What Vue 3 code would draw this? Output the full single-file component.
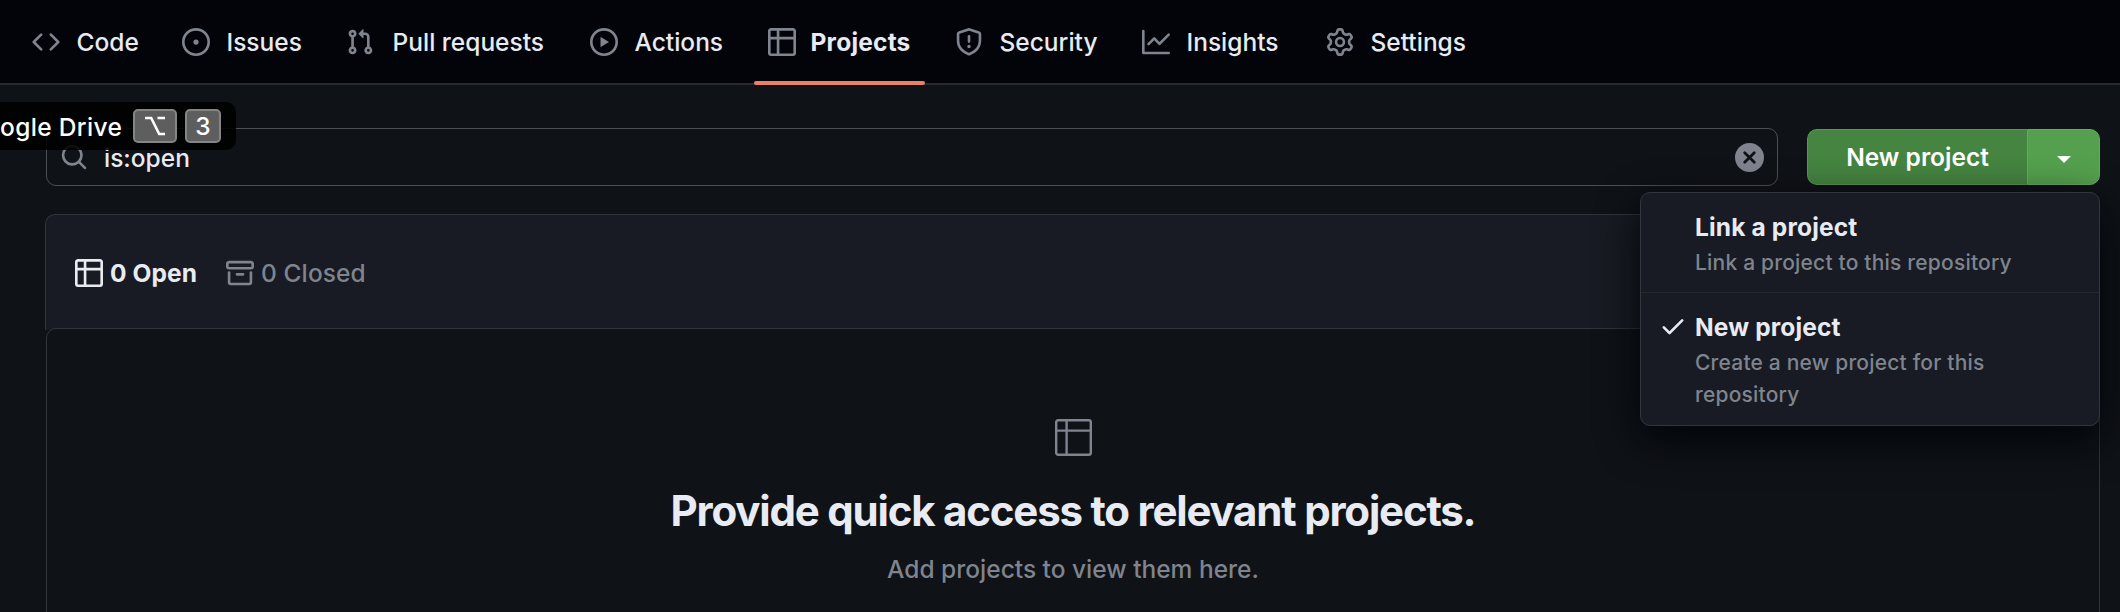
<template>
  <div class="page">
    <nav class="tabs">
      <a
        v-for="tab in tabs"
        :key="tab.name"
        class="tab"
        :class="{ tab__active: tab.name === activeTab }"
        @click="activeTab = tab.name"
      >
        <svg class="icon" viewBox="0 0 16 16"><path :d="icons[tab.icon]" /></svg>
        <span>{{ tab.name }}</span>
      </a>
    </nav>

    <div class="tooltip">
      <span class="tooltip__text">ogle Drive</span>
      <kbd class="key key__option">
        <svg viewBox="0 0 22 20"><path d="M1 2h6.2l8 16H21M13.5 2H21" /></svg>
      </kbd>
      <kbd class="key">3</kbd>
    </div>

    <main class="content">
      <div class="toolbar">
        <div class="search">
          <svg class="icon" viewBox="0 0 16 16"><path :d="icons.search" /></svg>
          <input v-model="query" class="search__input" type="text" spellcheck="false" />
          <svg class="search__clear" viewBox="0 0 29 29" @click="query = ''">
            <circle cx="14.5" cy="14.5" r="14.5" />
            <path d="M9.7 9.7l9.6 9.6M19.3 9.7l-9.6 9.6" />
          </svg>
        </div>
        <div class="actions">
          <button class="btn btn__main">New project</button>
          <button class="btn btn__caret" @click="menuOpen = !menuOpen">
            <span class="caret"></span>
          </button>
          <ul v-if="menuOpen" class="menu">
            <li
              v-for="option in options"
              :key="option.title"
              class="menu__item"
              @click="selected = option.title"
            >
              <span class="menu__check">
                <svg v-if="option.title === selected" class="icon" viewBox="0 0 16 16">
                  <path :d="icons.check" />
                </svg>
              </span>
              <div>
                <div class="menu__title">{{ option.title }}</div>
                <div class="menu__text">{{ option.text }}</div>
              </div>
            </li>
          </ul>
        </div>
      </div>

      <section class="panel">
        <header class="panel__header">
          <a class="count count__active">
            <svg class="icon" viewBox="0 0 16 16"><path :d="icons.table" /></svg>
            <span>0 Open</span>
          </a>
          <a class="count">
            <svg class="icon" viewBox="0 0 16 16"><path :d="icons.archive" /></svg>
            <span>0 Closed</span>
          </a>
        </header>
        <div class="blank">
          <svg class="blank__icon" viewBox="0 0 37 37">
            <rect x="1.2" y="1.2" width="34.6" height="34.6" rx="2" />
            <path d="M11.6 1v35M1 11.6h35" />
          </svg>
          <h3 class="blank__title">Provide quick access to relevant projects.</h3>
          <p class="blank__text">Add projects to view them here.</p>
        </div>
      </section>
    </main>
  </div>
</template>

<script setup>
import { ref } from "vue";

const activeTab = ref("Projects");
const query = ref("is:open");
const menuOpen = ref(true);
const selected = ref("New project");

const tabs = [
  { name: "Code", icon: "code" },
  { name: "Issues", icon: "issue" },
  { name: "Pull requests", icon: "pull" },
  { name: "Actions", icon: "play" },
  { name: "Projects", icon: "table" },
  { name: "Security", icon: "shield" },
  { name: "Insights", icon: "graph" },
  { name: "Settings", icon: "gear" },
];

const options = [
  { title: "Link a project", text: "Link a project to this repository" },
  { title: "New project", text: "Create a new project for this repository" },
];

const icons = {
  code: "m11.28 3.22 4.25 4.25a.75.75 0 0 1 0 1.06l-4.25 4.25a.749.749 0 0 1-1.275-.326.749.749 0 0 1 .215-.734L13.94 8l-3.72-3.72a.749.749 0 0 1 .326-1.275.749.749 0 0 1 .734.215Zm-6.56 0a.751.751 0 0 1 1.042.018.751.751 0 0 1 .018 1.042L2.06 8l3.72 3.72a.749.749 0 0 1-.326 1.275.749.749 0 0 1-.734-.215L.47 8.53a.75.75 0 0 1 0-1.06Z",
  issue: "M8 9.5a1.5 1.5 0 1 0 0-3 1.5 1.5 0 0 0 0 3ZM8 0a8 8 0 1 1 0 16A8 8 0 0 1 8 0ZM1.5 8a6.5 6.5 0 1 0 13 0 6.5 6.5 0 0 0-13 0Z",
  pull: "M1.5 3.25a2.25 2.25 0 1 1 3 2.122v5.256a2.251 2.251 0 1 1-1.5 0V5.372A2.25 2.25 0 0 1 1.5 3.25Zm5.677-.177L9.573.677A.25.25 0 0 1 10 .854V2.5h1A2.5 2.5 0 0 1 13.5 5v5.628a2.251 2.251 0 1 1-1.5 0V5a1 1 0 0 0-1-1h-1v1.646a.25.25 0 0 1-.427.177L7.177 3.427a.25.25 0 0 1 0-.354ZM3.75 2.5a.75.75 0 1 0 0 1.5.75.75 0 0 0 0-1.5Zm0 9.5a.75.75 0 1 0 0 1.5.75.75 0 0 0 0-1.5Zm8.25.75a.75.75 0 1 0 1.5 0 .75.75 0 0 0-1.5 0Z",
  play: "M8 0a8 8 0 1 1 0 16A8 8 0 0 1 8 0ZM1.5 8a6.5 6.5 0 1 0 13 0 6.5 6.5 0 0 0-13 0Zm4.879-2.773 4.264 2.559a.25.25 0 0 1 0 .428l-4.264 2.559A.25.25 0 0 1 6 10.559V5.442a.25.25 0 0 1 .379-.215Z",
  table: "M0 1.75C0 .784.784 0 1.75 0h12.5C15.216 0 16 .784 16 1.75v12.5A1.75 1.75 0 0 1 14.25 16H1.75A1.75 1.75 0 0 1 0 14.25ZM6.5 6.5v8h7.75a.25.25 0 0 0 .25-.25V6.5Zm8-1.5V1.75a.25.25 0 0 0-.25-.25H6.5V5Zm-13 1.5v7.75c0 .138.112.25.25.25H5v-8ZM5 5V1.5H1.75a.25.25 0 0 0-.25.25V5Z",
  shield: "M7.467.133a1.748 1.748 0 0 1 1.066 0l5.25 1.68A1.75 1.75 0 0 1 15 3.48V7c0 1.566-.32 3.182-1.303 4.682-.983 1.498-2.585 2.813-5.032 3.855a1.697 1.697 0 0 1-1.33 0c-2.447-1.042-4.049-2.357-5.032-3.855C1.32 10.182 1 8.566 1 7V3.48a1.75 1.75 0 0 1 1.217-1.667Zm.61 1.429a.25.25 0 0 0-.153 0l-5.25 1.68a.25.25 0 0 0-.174.238V7c0 1.358.275 2.666 1.057 3.86.784 1.194 2.121 2.34 4.366 3.297a.196.196 0 0 0 .154 0c2.245-.956 3.582-2.104 4.366-3.298C13.225 9.666 13.5 8.36 13.5 7V3.48a.251.251 0 0 0-.174-.237l-5.25-1.68ZM8.75 4.75v3a.75.75 0 0 1-1.5 0v-3a.75.75 0 0 1 1.5 0ZM9 10.5a1 1 0 1 1-2 0 1 1 0 0 1 2 0Z",
  graph: "M1.5 1.75V13.5h13.75a.75.75 0 0 1 0 1.5H.75a.75.75 0 0 1-.75-.75V1.75a.75.75 0 0 1 1.5 0Zm14.28 2.53-5.25 5.25a.75.75 0 0 1-1.06 0L7 7.06 4.28 9.78a.751.751 0 0 1-1.042-.018.751.751 0 0 1-.018-1.042l3.25-3.25a.75.75 0 0 1 1.06 0L10 7.94l4.72-4.72a.751.751 0 0 1 1.042.018.751.751 0 0 1 .018 1.042Z",
  gear: "M8 0a8.2 8.2 0 0 1 .701.031C9.444.095 9.99.645 10.16 1.29l.288 1.107c.018.066.079.158.212.224.231.114.454.243.668.386.123.082.233.09.299.071l1.103-.303c.644-.176 1.392.021 1.82.63.27.385.506.792.704 1.218.315.675.111 1.422-.364 1.891l-.814.806c-.049.048-.098.147-.088.294.016.257.016.515 0 .772-.01.147.038.246.088.294l.814.806c.475.469.679 1.216.364 1.891a7.977 7.977 0 0 1-.704 1.217c-.428.61-1.176.807-1.82.63l-1.102-.302c-.067-.019-.177-.011-.3.071a5.909 5.909 0 0 1-.668.386c-.133.066-.194.158-.211.224l-.29 1.106c-.168.646-.715 1.196-1.458 1.26a8.006 8.006 0 0 1-1.402 0c-.743-.064-1.289-.614-1.458-1.26l-.289-1.106c-.018-.066-.079-.158-.212-.224a5.738 5.738 0 0 1-.668-.386c-.123-.082-.233-.09-.299-.071l-1.103.303c-.644.176-1.392-.021-1.82-.63a8.12 8.12 0 0 1-.704-1.218c-.315-.675-.111-1.422.363-1.891l.815-.806c.05-.048.098-.147.088-.294a6.214 6.214 0 0 1 0-.772c.01-.147-.038-.246-.088-.294l-.815-.806C.635 6.045.431 5.298.746 4.623a7.92 7.92 0 0 1 .704-1.217c.428-.61 1.176-.807 1.82-.63l1.102.302c.067.019.177.011.3-.071.214-.143.437-.272.668-.386.133-.066.194-.158.211-.224l.29-1.106C6.009.645 6.556.095 7.299.03 7.53.01 7.764 0 8 0Zm-.571 1.525c-.036.003-.108.036-.137.146l-.289 1.105c-.147.561-.549.967-.998 1.189-.173.086-.34.183-.5.29-.417.278-.97.423-1.529.27l-1.103-.303c-.109-.03-.175.016-.195.045-.22.312-.412.644-.573.99-.014.031-.021.11.059.19l.815.806c.411.406.562.957.53 1.456a4.709 4.709 0 0 0 0 .582c.032.499-.119 1.05-.53 1.456l-.815.806c-.081.08-.073.159-.059.19.162.346.353.677.573.989.02.03.085.076.195.046l1.102-.303c.56-.153 1.113-.008 1.53.27.161.107.328.204.501.29.447.222.85.629.997 1.189l.289 1.105c.029.109.101.143.137.146a6.6 6.6 0 0 0 1.142 0c.036-.003.108-.036.137-.146l.289-1.105c.147-.561.549-.967.998-1.189.173-.086.34-.183.5-.29.417-.278.97-.423 1.529-.27l1.103.303c.109.029.175-.016.195-.045.22-.313.411-.644.573-.99.014-.031.021-.11-.059-.19l-.815-.806c-.411-.406-.562-.957-.53-1.456a4.709 4.709 0 0 0 0-.582c-.032-.499.119-1.05.53-1.456l.815-.806c.081-.08.073-.159.059-.19a6.464 6.464 0 0 0-.573-.989c-.02-.03-.085-.076-.195-.046l-1.102.303c-.56.153-1.113.008-1.53-.27a4.44 4.44 0 0 0-.501-.29c-.447-.222-.85-.629-.997-1.189l-.289-1.105c-.029-.11-.101-.143-.137-.146a6.6 6.6 0 0 0-1.142 0ZM11 8a3 3 0 1 1-6 0 3 3 0 0 1 6 0ZM9.5 8a1.5 1.5 0 1 0-3.001.001A1.5 1.5 0 0 0 9.5 8Z",
  search: "M10.68 11.74a6 6 0 0 1-7.922-8.982 6 6 0 0 1 8.982 7.922l3.04 3.04a.749.749 0 0 1-.326 1.275.749.749 0 0 1-.734-.215ZM11.5 7a4.499 4.499 0 1 0-8.997 0A4.499 4.499 0 0 0 11.5 7Z",
  archive: "M0 2.75C0 1.784.784 1 1.75 1h12.5c.966 0 1.75.784 1.75 1.75v1.5A1.75 1.75 0 0 1 14.25 6H1.75A1.75 1.75 0 0 1 0 4.25ZM1.75 7a.75.75 0 0 1 .75.75v5.5c0 .138.112.25.25.25h10.5a.25.25 0 0 0 .25-.25v-5.5a.75.75 0 0 1 1.5 0v5.5A1.75 1.75 0 0 1 13.25 15H2.75A1.75 1.75 0 0 1 1 13.25v-5.5A.75.75 0 0 1 1.75 7Zm0-4.5a.25.25 0 0 0-.25.25v1.5c0 .138.112.25.25.25h12.5a.25.25 0 0 0 .25-.25v-1.5a.25.25 0 0 0-.25-.25ZM6.25 8h3.5a.75.75 0 0 1 0 1.5h-3.5a.75.75 0 0 1 0-1.5Z",
  check: "M13.78 4.22a.75.75 0 0 1 0 1.06l-7.25 7.25a.75.75 0 0 1-1.06 0L2.22 9.28a.751.751 0 0 1 .018-1.042.751.751 0 0 1 1.042-.018L6 10.94l6.72-6.72a.75.75 0 0 1 1.06 0Z",
};
</script>

<style>
body {
  background: #0f1217;
}
</style>

<style scoped>
.page {
  position: relative;
  box-sizing: border-box;
  height: 612px;
  overflow: hidden;
  background: #0f1217;
  color: #e8ebf2;
  font-family: Inter, "Liberation Sans", sans-serif;
  font-size: 24.5px;
  font-weight: 450;
  line-height: 36px;
}
.icon {
  flex: none;
  width: 28px;
  height: 28px;
  fill: #7f848e;
}
.tabs {
  display: grid;
  grid-template-columns: 150px 164px 244px 178px 187px 187px 184px 170px;
  height: 83px;
  padding-left: 17.5px;
  background: #020409;
  border-bottom: 2px solid #27292e;
}
.tab {
  position: relative;
  display: flex;
  align-items: center;
  justify-self: start;
  gap: 17px;
  padding-left: 14px;
  white-space: nowrap;
  cursor: pointer;
}
.tab:nth-child(3) {
  gap: 19px;
}
.tab__active {
  gap: 15px;
  padding-right: 14px;
  font-weight: 650;
  letter-spacing: 0.2px;
}
.tab__active::after {
  content: "";
  position: absolute;
  left: 0;
  right: 0;
  bottom: -2px;
  height: 4px;
  border-radius: 2px;
  background: #ea8068;
}
.tooltip {
  position: absolute;
  z-index: 2;
  top: 102px;
  left: 0;
  display: flex;
  align-items: center;
  gap: 8px;
  box-sizing: border-box;
  width: 236px;
  height: 48px;
  border-radius: 0 10px 10px 0;
  background: rgba(0, 0, 0, 0.88);
  color: #fff;
}
.tooltip__text {
  width: 125px;
  padding-top: 1px;
  letter-spacing: 0.35px;
  white-space: nowrap;
}
.key {
  display: flex;
  align-items: center;
  justify-content: center;
  box-sizing: border-box;
  width: 36px;
  height: 34px;
  border: 2px solid #858585;
  border-radius: 5px;
  background: #5e5e5e;
  font-family: inherit;
}
.key__option {
  width: 44px;
}
.key__option svg {
  width: 22px;
  height: 20px;
  fill: none;
  stroke: #fff;
  stroke-width: 2.6;
}
.content {
  padding: 43px 20px 0 45px;
}
.toolbar {
  display: flex;
  align-items: center;
  gap: 29px;
  padding-left: 1px;
}
.search {
  display: flex;
  flex: 1;
  align-items: center;
  box-sizing: border-box;
  height: 58px;
  padding: 0 13px;
  border: 1px solid #4c4f55;
  border-radius: 10px;
}
.search__input {
  flex: 1;
  min-width: 0;
  padding: 2px 0 0 16px;
  border: 0;
  outline: 0;
  background: none;
  color: inherit;
  font: inherit;
}
.search__clear {
  width: 29px;
  height: 29px;
  fill: #7f848e;
}
.search__clear path {
  stroke: #0f1217;
  stroke-width: 2.8;
  stroke-linecap: round;
}
.actions {
  position: relative;
  display: flex;
  width: 293px;
  height: 56px;
}
.btn {
  box-sizing: border-box;
  padding: 0;
  border: 1px solid #5a9655;
  color: #fff;
  font: inherit;
  font-weight: 600;
}
.btn__main {
  width: 220px;
  border-right: 0;
  border-radius: 10px 0 0 10px;
  background: #458441;
}
.btn__caret {
  display: flex;
  flex: 1;
  align-items: center;
  justify-content: center;
  border-color: #67a961;
  border-radius: 0 10px 10px 0;
  background: #54a04e;
}
.caret {
  margin-top: 4px;
  border: 7px solid transparent;
  border-top-color: #fff;
  border-bottom: 0;
}
.menu {
  position: absolute;
  z-index: 1;
  top: 63px;
  right: 0;
  box-sizing: border-box;
  width: 460px;
  height: 234px;
  margin: 0;
  padding: 0;
  border: 1px solid #33363c;
  border-radius: 10px;
  background: #181b23;
  box-shadow: 0 14px 42px #010409;
  list-style: none;
}
.menu__item {
  display: flex;
  padding: 16px 50px 13px 18px;
  cursor: pointer;
}
.menu__item + .menu__item {
  border-top: 1px solid #24272e;
}
.menu__check {
  flex: none;
  width: 36px;
  padding-top: 3px;
}
.menu__check .icon {
  fill: #e8ebf2;
}
.menu__title {
  font-weight: 650;
  letter-spacing: 0.15px;
}
.menu__text {
  margin-top: 2px;
  color: #7f848e;
  font-size: 21px;
  line-height: 32px;
  letter-spacing: 0.2px;
}
.panel__header {
  display: flex;
  align-items: center;
  box-sizing: border-box;
  height: 116px;
  margin-top: 28px;
  padding: 0 29px;
  border: 1px solid #32353b;
  border-bottom: 0;
  border-radius: 10px 10px 0 0;
  background: #181b23;
}
.count {
  display: flex;
  align-items: center;
  gap: 7px;
  color: #7f848e;
  letter-spacing: 0.1px;
  white-space: nowrap;
}
.count__active {
  width: 151px;
  color: #e8ebf2;
  font-weight: 650;
}
.count__active .icon {
  fill: #e8ebf2;
}
.blank {
  display: flex;
  flex-direction: column;
  align-items: center;
  height: 400px;
  margin: -2px 0 0 1px;
  padding-top: 90px;
  border: 1px solid #32353b;
  border-radius: 10px 10px 0 0;
  background: #0f1217;
}
.blank__icon {
  width: 37px;
  height: 37px;
  fill: none;
  stroke: #7f848e;
  stroke-width: 2.4;
}
.blank__title {
  margin: 23px 0 0;
  font-size: 42px;
  font-weight: 650;
  line-height: 63px;
  letter-spacing: -1.2px;
}
.blank__text {
  margin: 9px 0 0;
  color: #7f848e;
}
</style>
